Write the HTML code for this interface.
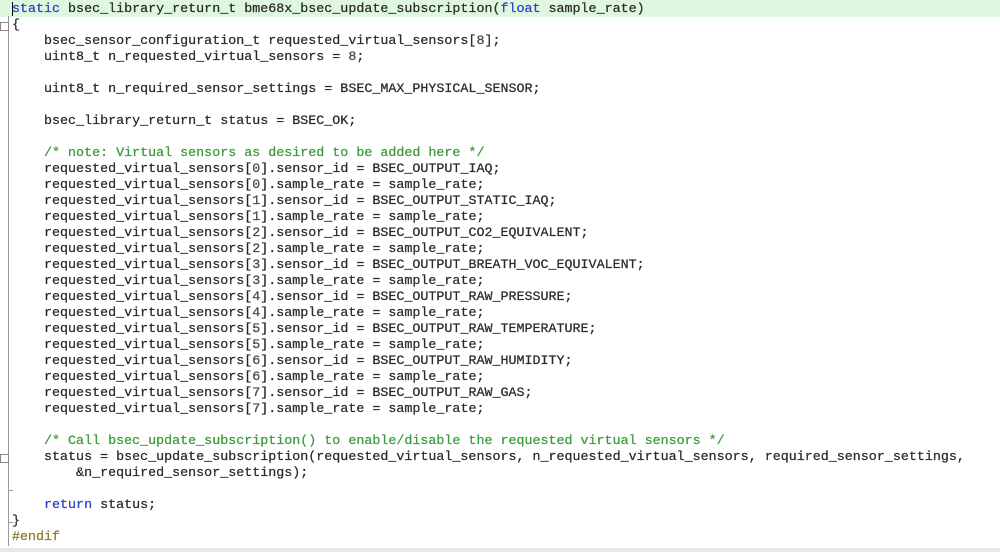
<!DOCTYPE html>
<html><head><meta charset="utf-8"><style>
html,body{margin:0;padding:0;background:#fff;width:1000px;height:552px;overflow:hidden}
.g{position:absolute;left:8px;top:16px;width:1px;height:530px;background:#999}
.hl{position:absolute;left:0;top:0;width:1000px;height:17px;background:#dff7df}
pre{position:absolute;left:12px;top:2px;margin:0;font-family:"Liberation Mono","Courier New",monospace;font-size:13.35px;line-height:16px;color:#2a2a2a;-webkit-text-stroke:0.25px #2a2a2a}
.k{color:#2b3fc9;-webkit-text-stroke-color:#2b3fc9}
.c{color:#3a9a3a;-webkit-text-stroke-color:#3a9a3a}
.n{color:#555}
.p{color:#8a7a20;-webkit-text-stroke-color:#8a7a20}
.box{position:absolute;width:7px;height:7px;border:1px solid #888;background:#fff}
.tick{position:absolute;height:1px;width:5px;background:#999;left:8px}
.bot{position:absolute;left:0;top:548px;width:1000px;height:4px;background:#e8e8e8}
.cur{position:absolute;left:12px;top:2px;width:1px;height:14px;background:#000}
</style></head><body>
<div class="hl"></div>
<div class="g"></div>
<div class="box" style="left:0;top:22px"></div>
<div class="box" style="left:0;top:454px"></div>
<div class="tick" style="top:490px"></div>
<div class="tick" style="top:522px"></div>
<div class="cur"></div>
<pre><span class="k">static</span> bsec_library_return_t bme68x_bsec_update_subscription(<span class="k">float</span> sample_rate)
{
    bsec_sensor_configuration_t requested_virtual_sensors[<span class="n">8</span>];
    uint8_t n_requested_virtual_sensors = <span class="n">8</span>;

    uint8_t n_required_sensor_settings = BSEC_MAX_PHYSICAL_SENSOR;

    bsec_library_return_t status = BSEC_OK;

    <span class="c">/* note: Virtual sensors as desired to be added here */</span>
    requested_virtual_sensors[<span class="n">0</span>].sensor_id = BSEC_OUTPUT_IAQ;
    requested_virtual_sensors[<span class="n">0</span>].sample_rate = sample_rate;
    requested_virtual_sensors[<span class="n">1</span>].sensor_id = BSEC_OUTPUT_STATIC_IAQ;
    requested_virtual_sensors[<span class="n">1</span>].sample_rate = sample_rate;
    requested_virtual_sensors[<span class="n">2</span>].sensor_id = BSEC_OUTPUT_CO2_EQUIVALENT;
    requested_virtual_sensors[<span class="n">2</span>].sample_rate = sample_rate;
    requested_virtual_sensors[<span class="n">3</span>].sensor_id = BSEC_OUTPUT_BREATH_VOC_EQUIVALENT;
    requested_virtual_sensors[<span class="n">3</span>].sample_rate = sample_rate;
    requested_virtual_sensors[<span class="n">4</span>].sensor_id = BSEC_OUTPUT_RAW_PRESSURE;
    requested_virtual_sensors[<span class="n">4</span>].sample_rate = sample_rate;
    requested_virtual_sensors[<span class="n">5</span>].sensor_id = BSEC_OUTPUT_RAW_TEMPERATURE;
    requested_virtual_sensors[<span class="n">5</span>].sample_rate = sample_rate;
    requested_virtual_sensors[<span class="n">6</span>].sensor_id = BSEC_OUTPUT_RAW_HUMIDITY;
    requested_virtual_sensors[<span class="n">6</span>].sample_rate = sample_rate;
    requested_virtual_sensors[<span class="n">7</span>].sensor_id = BSEC_OUTPUT_RAW_GAS;
    requested_virtual_sensors[<span class="n">7</span>].sample_rate = sample_rate;

    <span class="c">/* Call bsec_update_subscription() to enable/disable the requested virtual sensors */</span>
    status = bsec_update_subscription(requested_virtual_sensors, n_requested_virtual_sensors, required_sensor_settings,
        &amp;n_required_sensor_settings);

    <span class="k">return</span> status;
}
<span class="p">#endif</span></pre>
<div class="bot"></div>
</body></html>
